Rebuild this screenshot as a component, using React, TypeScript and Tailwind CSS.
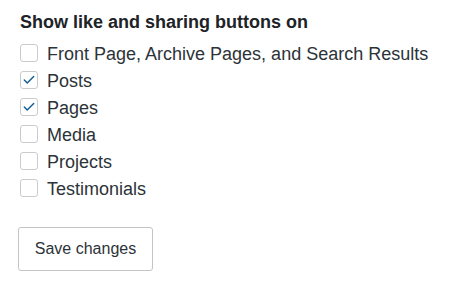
import { Check } from "lucide-react";

const items = [
  { label: "Front Page, Archive Pages, and Search Results", checked: false },
  { label: "Posts", checked: true },
  { label: "Pages", checked: true },
  { label: "Media", checked: false },
  { label: "Projects", checked: false },
  { label: "Testimonials", checked: false },
];

export default function App() {
  return (
    <div className="min-h-screen bg-white px-5 pt-[11px] font-['Liberation_Sans',Arial,sans-serif]">
      <h2 className="text-[18px] font-semibold leading-[22px] text-[#1d2327]">
        Show like and sharing buttons on
      </h2>

      <div className="mt-[6px] flex flex-col">
        {items.map((item) => (
          <label key={item.label} className="flex h-[27px] items-center gap-[9px]">
            <span className="flex h-[18px] w-[18px] items-center justify-center rounded-[3px] border border-[#c9cbcd] bg-white">
              {item.checked && <Check size={14} strokeWidth={2.5} className="text-[#135e96]" />}
            </span>
            <span className="pt-[3px] text-[18px] leading-[22px] text-[#2c3338]">{item.label}</span>
          </label>
        ))}
      </div>

      <button className="mt-[26px] -ml-[2px] h-[44px] w-[135px] rounded-[3px] border border-[#c3c4c7] bg-white text-[16px] text-[#2c3338]">
        Save changes
      </button>
    </div>
  );
}
